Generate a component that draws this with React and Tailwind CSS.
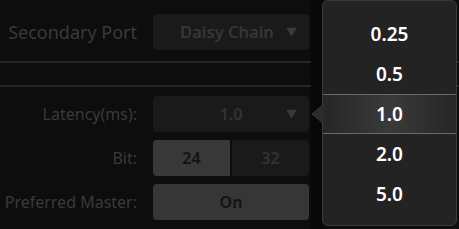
import React from 'react';

const Caret = () => (
  <svg width="11" height="9" viewBox="0 0 11 9" className="absolute right-[12px] top-1/2 -translate-y-1/2">
    <path d="M0 0 L11 0 L5.5 9 Z" fill="#3a3a3a" />
  </svg>
);

const Row = ({ label, big, children }) => (
  <div className="flex items-center h-9">
    <div className={`w-[137px] text-right text-[#3a3a3a] whitespace-nowrap ${big ? 'text-[18px]' : 'text-[16px]'}`}>{label}</div>
    <div className="ml-4 w-[156px] h-9 flex shrink-0">{children}</div>
  </div>
);

const options = ['0.25', '0.5', '1.0', '2.0', '5.0'];

export default function App() {
  return (
    <div className="relative w-[459px] h-[229px] overflow-hidden bg-[#0d0d0d]" style={{ fontFamily: '"Noto Sans", "Open Sans", sans-serif' }}>
      <div className="pt-[14px]">
        <Row label="Secondary Port" big>
          <div className="relative w-full h-full rounded-[4px] bg-[#1a1a1a] flex items-center justify-center text-[16.5px] font-semibold text-[#363636]">
            <span className="-ml-2">Daisy Chain</span>
            <Caret />
          </div>
        </Row>
        <div className="mt-[11px] h-[2px] bg-[#262626]" />
        <div className="mt-[22px] h-[2px] bg-[#262626]" />
        <div className="mt-[9px] flex flex-col gap-2">
          <Row label="Latency(ms):">
            <div className="relative w-full h-full rounded-[4px] bg-[#1a1a1a] flex items-center justify-center text-[16px] font-semibold text-[#333]">
              1.0
              <Caret />
            </div>
          </Row>
          <Row label="Bit:">
            <div className="flex w-full h-full gap-[2px]">
              <div className="flex-1 rounded-l-[4px] bg-[#383838] flex items-center justify-center text-[16px] font-semibold text-[#121212]">24</div>
              <div className="flex-1 rounded-r-[4px] bg-[#1a1a1a] flex items-center justify-center text-[16px] font-semibold text-[#333]">32</div>
            </div>
          </Row>
          <Row label="Preferred Master:">
            <div className="w-full h-full rounded-[4px] bg-[#363636] flex items-center justify-center text-[16px] font-semibold text-[#121212]">On</div>
          </Row>
        </div>
      </div>

      {/* latency popup */}
      <div className="absolute left-[311px] top-0 w-[12px] h-[229px] bg-[#080808]" />
      <div className="absolute left-[322px] top-0 w-[135px] h-[226px] rounded-[6px] border border-[#3a3a3a] bg-[#232323] pt-[13px]">
        {options.map((o) => (
          <div
            key={o}
            className={
              o === '1.0'
                ? 'h-10 flex items-center justify-center text-[19px] font-semibold text-white border-y border-[#6a6a6a] bg-[linear-gradient(90deg,#262626,#3a3a3a_50%,#262626)]'
                : 'h-10 flex items-center justify-center text-[19px] font-semibold text-white'
            }
          >
            {o}
          </div>
        ))}
      </div>
      <svg className="absolute left-[311px] top-[104px]" width="13" height="20" viewBox="0 0 13 20">
        <path d="M13 0 L1 10 L13 20 Z" fill="#2c2c2c" />
        <path d="M13 0 L1 10 L13 20" fill="none" stroke="#3a3a3a" strokeWidth="1" />
      </svg>
    </div>
  );
}
